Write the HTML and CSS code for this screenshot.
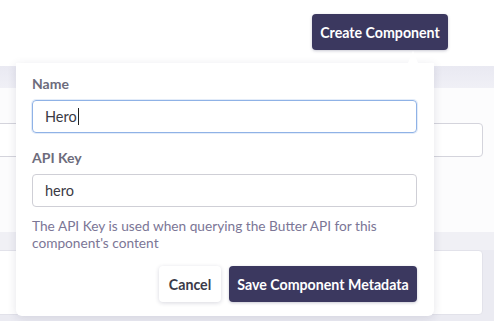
FILE: index.html
```html
<!DOCTYPE html>
<html>
<head>
<meta charset="utf-8">
<link rel="stylesheet" href="styles.css">
</head>
<body>
<div class="page">
  <div class="topbar">
    <button class="btn btn-primary create">Create Component</button>
  </div>
  <div class="main">
    <div class="band"></div>
    <div class="panel">
      <div class="bg-input"></div>
    </div>
    <div class="gap"></div>
    <div class="card"></div>
  </div>

  <div class="popover">
    <div class="arrow"></div>
    <label class="label">Name</label>
    <div class="input focus">Hero<span class="caret"></span></div>
    <label class="label">API Key</label>
    <div class="input">hero</div>
    <p class="help">The API Key is used when querying the Butter API for this component's content</p>
    <div class="actions">
      <button class="btn btn-light">Cancel</button>
      <button class="btn btn-primary">Save Component Metadata</button>
    </div>
  </div>
</div>
</body>
</html>
```
FILE: styles.css
```css
* { box-sizing: border-box; }
html, body { margin: 0; padding: 0; }
body {
  font-family: Lato, "Open Sans", sans-serif;
  background: #ebebf2;
  width: 494px;
  height: 321px;
  overflow: hidden;
}
.page { position: relative; height: 321px; }
.topbar {
  height: 66px;
  background: #fff;
  display: flex;
  justify-content: flex-end;
  align-items: flex-start;
  padding: 14px 46px 0 0;
}
.btn {
  font-family: inherit;
  font-weight: 700;
  font-size: 14.2px;
  border: none;
  border-radius: 4px;
  height: 36px;
  padding: 0;
  cursor: pointer;
}
.btn-primary {
  background: #3b385f;
  color: #fff;
  box-shadow: 0 1px 3px rgba(40, 40, 80, 0.25);
}
.create { width: 136px; }
.main { display: flex; flex-direction: column; }
.band {
  height: 22px;
  background: linear-gradient(#e9e9f2, #f0f0f6);
}
.panel {
  background: #fcfcfd;
  height: 144px;
  padding-top: 35px;
}
.bg-input {
  height: 34px;
  margin: 0 11px 0 -20px;
  border: 1px solid #d4d4dc;
  border-radius: 4px;
  background: #fff;
}
.gap { height: 18px; background: #f0f0f5; }
.card {
  height: 65px;
  margin: 0 11px 0 -10px;
  background: #fff;
  border: 1px solid #e2e2ea;
  border-radius: 4px;
}
.popover {
  position: absolute;
  left: 16px;
  top: 63px;
  width: 418px;
  height: 253px;
  background: #fff;
  border-radius: 0 0 6px 6px;
  box-shadow: 0 2px 10px rgba(40, 40, 80, 0.12);
  padding: 13px 17px 0 16px;
  display: flex;
  flex-direction: column;
}
.arrow {
  position: absolute;
  top: -12px;
  right: 16px;
  width: 0; height: 0;
  border-left: 5px solid transparent;
  border-right: 5px solid transparent;
  border-bottom: 12px solid #fff;
}
.label {
  font-size: 14px;
  font-weight: 700;
  color: #6d6c7c;
  line-height: 16px;
  margin-bottom: 8px;
}
.input {
  height: 33px;
  border: 1px solid #cfcfd6;
  border-radius: 4px;
  padding: 0 12px;
  font-size: 14.5px;
  color: #3a3a44;
  display: flex;
  align-items: center;
  margin-bottom: 17px;
}
.input.focus {
  border-color: #8fb2e6;
  box-shadow: 0 0 0 1px rgba(143, 178, 230, 0.25);
}
.caret {
  display: inline-block;
  width: 1px;
  height: 17px;
  background: #222;
  margin-left: 1px;
}
.help {
  margin: -7px 0 0 0;
  font-size: 13.7px;
  line-height: 17px;
  color: #7b7696;
}
.actions {
  display: flex;
  justify-content: flex-end;
  gap: 8px;
  margin-top: 15px;
}
.btn-light {
  background: #fff;
  color: #3a3a48;
  width: 62px;
  box-shadow: 0 1px 4px rgba(40, 40, 80, 0.18);
}
.actions .btn-primary { width: 188px; }
```
